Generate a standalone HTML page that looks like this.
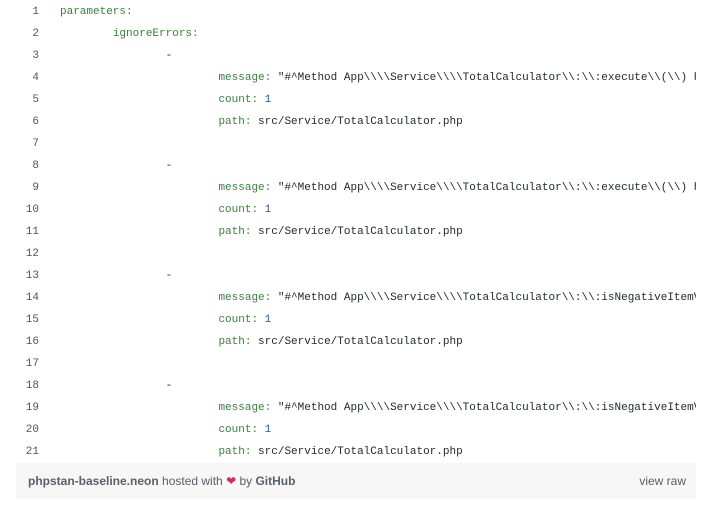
<!DOCTYPE html>
<html><head><style>
body{margin:0;background:#fff;width:709px;height:509px;overflow:hidden;}
.code{position:absolute;left:16px;top:0;width:680px;height:463px;overflow:hidden;}
.ln{position:absolute;left:0;width:23px;text-align:right;color:#555;}
.l{position:absolute;left:44px;white-space:pre;color:#24292e;tab-size:8;}
.code div{font:11px "Liberation Mono",monospace;line-height:22px;height:22px;}
.k{color:#3a7f3a}.n{color:#1f5aa8}
.foot{position:absolute;left:16px;top:463px;width:680px;height:36px;background:#f7f7f7;font:12px "Liberation Sans",sans-serif;color:#586069;line-height:36px;}
.foot b{color:#586069;font-weight:bold;}
</style></head><body>
<div class="code" id="c"></div>
<div class="foot"><span style="position:absolute;left:12px"><b>phpstan-baseline.neon</b> hosted with <span style="color:#e0245e">❤</span> by <b>GitHub</b></span><span style="position:absolute;right:10px">view raw</span></div>
<script>
var msgs=['App\\\\\\\\Service\\\\\\\\TotalCalculator\\\\:\\\\:execute\\\\(\\\\) h','App\\\\\\\\Service\\\\\\\\TotalCalculator\\\\:\\\\:execute\\\\(\\\\) h','App\\\\\\\\Service\\\\\\\\TotalCalculator\\\\:\\\\:isNegativeItemV','App\\\\\\\\Service\\\\\\\\TotalCalculator\\\\:\\\\:isNegativeItemV'];
var lines=['<span class="k">parameters</span><span class="k">:</span>','\t<span class="k">ignoreErrors:</span>'];
msgs.forEach(function(m,i){
lines.push('\t\t-');
lines.push('\t\t\t<span class="k">message:</span> "#^Method '+m);
lines.push('\t\t\t<span class="k">count:</span> <span class="n">1</span>');
lines.push('\t\t\t<span class="k">path:</span> src/Service/TotalCalculator.php');
if(i<3)lines.push('');
});
var h='';
lines.forEach(function(l,i){var t=i*22+1;h+='<div class="ln" style="top:'+t+'px">'+(i+1)+'</div><div class="l" style="top:'+t+'px">'+l+'</div>';});
document.getElementById('c').innerHTML=h;
</script>
</body></html>
